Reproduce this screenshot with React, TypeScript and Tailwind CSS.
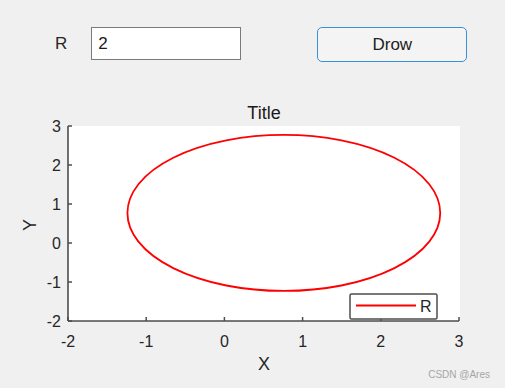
import React from 'react';

// axes geometry in page pixels
const AX = { left: 68, right: 459, top: 126, bottom: 321 };
const xToPx = (x: number) => AX.left + ((x + 2) / 5) * (AX.right - AX.left);
const yToPx = (y: number) => AX.bottom - ((y + 2) / 5) * (AX.bottom - AX.top);

const xTicks = [-2, -1, 0, 1, 2, 3];
const yTicks = [-2, -1, 0, 1, 2, 3];

const PlotAxes: React.FC<{ r: number }> = ({ r }) => {
  const cx = xToPx(0.76);
  const cy = yToPx(0.77);
  const rx = xToPx(r) - xToPx(0);
  const ry = yToPx(0) - yToPx(r);
  const axisColor = '#4d4d4d';

  return (
    <svg width="505" height="326" className="block">
      <g transform="translate(0,-62)" fontFamily="'Liberation Sans', Arial, sans-serif">
        {/* Title */}
        <text x="264" y="119" textAnchor="middle" fontSize="18" fill="#1a1a1a">
          Title
        </text>

        {/* Plot background */}
        <rect x={AX.left} y={AX.top} width={AX.right - AX.left + 1} height={AX.bottom - AX.top} fill="#ffffff" />

        {/* Data */}
        <ellipse cx={cx} cy={cy} rx={rx} ry={ry} fill="none" stroke="#ff0000" strokeWidth="1.8" />

        {/* Axes lines */}
        <line x1={AX.left} y1={AX.top} x2={AX.left} y2={AX.bottom} stroke={axisColor} strokeWidth="1.6" />
        <line x1={AX.left} y1={AX.bottom} x2={AX.right} y2={AX.bottom} stroke={axisColor} strokeWidth="1.6" />

        {/* X ticks */}
        {xTicks.map((t) => (
          <g key={`x${t}`}>
            <line x1={xToPx(t)} y1={AX.bottom} x2={xToPx(t)} y2={AX.bottom - 4} stroke={axisColor} strokeWidth="1.5" />
            <text x={xToPx(t)} y="347" textAnchor="middle" fontSize="16" fill="#262626">
              {t}
            </text>
          </g>
        ))}

        {/* Y ticks */}
        {yTicks.map((t) => (
          <g key={`y${t}`}>
            <line x1={AX.left} y1={yToPx(t)} x2={AX.left + 4} y2={yToPx(t)} stroke={axisColor} strokeWidth="1.5" />
            <text x="61" y={yToPx(t) + 6} textAnchor="end" fontSize="16" fill="#262626">
              {t}
            </text>
          </g>
        ))}

        {/* Axis labels */}
        <text x="264" y="370" textAnchor="middle" fontSize="18" fill="#262626">
          X
        </text>
        <text
          x="30"
          y="225"
          textAnchor="middle"
          dominantBaseline="central"
          fontSize="18"
          fill="#262626"
          transform="rotate(-90 30 225)"
        >
          Y
        </text>

        {/* Legend */}
        <rect x="350" y="294" width="87" height="25" rx="1.5" fill="#ffffff" stroke="#4d4d4d" strokeWidth="1.5" />
        <line x1="356" y1="305.5" x2="416" y2="305.5" stroke="#ff0000" strokeWidth="2" />
        <text x="420" y="312" fontSize="16" fill="#262626">
          R
        </text>
      </g>
    </svg>
  );
};

export default function App() {
  const r = 2;

  return (
    <div className="relative w-[505px] h-[388px] overflow-hidden bg-[#f0f0f0] font-['Liberation_Sans',Arial,sans-serif]">
      {/* Controls row */}
      <div className="flex items-start pt-[27px] h-[62px]">
        <span className="ml-[55px] mt-[6px] text-[17px] leading-[22px] text-[#262626]">R</span>
        <input
          readOnly
          defaultValue={String(r)}
          className="ml-[24px] w-[150px] h-[33px] border border-[#7a7a7a] bg-white px-[6px] text-[17px] text-[#1a1a1a] outline-none"
        />
        <button className="ml-[76px] w-[150px] h-[35px] rounded-[5px] border border-[#3c8ed9] bg-[#f4f4f4] text-[17px] text-[#222222]">
          Drow
        </button>
      </div>

      <PlotAxes r={r} />

      {/* Watermark */}
      <span className="absolute right-[15px] bottom-[6px] text-[10px] text-[#a6a6a6]">CSDN @Ares</span>
    </div>
  );
}
